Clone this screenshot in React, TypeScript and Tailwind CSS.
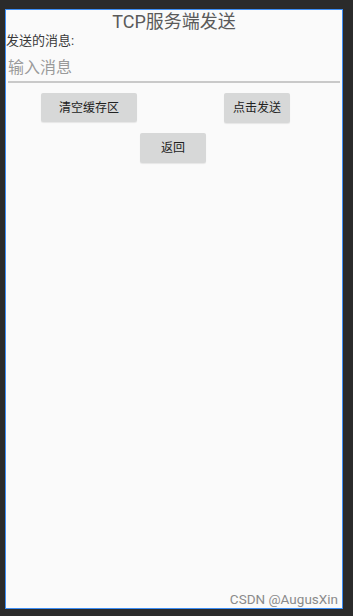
import React from 'react'

const font = { fontFamily: 'Roboto, "Noto Sans CJK SC", sans-serif' }

function Btn({ label, className }: { label: string; className: string }) {
  return (
    <button
      className={`flex items-center justify-center rounded-[2px] bg-[#d7d8d8] text-[12px] text-[#222] shadow-[0_1px_1px_rgba(0,0,0,0.08)] ${className}`}
    >
      {label}
    </button>
  )
}

export default function App() {
  return (
    <div className="relative h-[616px] w-[353px] bg-[#2b2b2b] pl-[5px] pt-[9px]" style={font}>
      <div className="flex h-[600px] w-[338px] flex-col border border-[#3d8ef5] bg-[#fafafa]">
        <h1 className="h-[23px] text-center text-[18px] leading-[23px] text-[#5a5a5a]">TCP服务端发送</h1>
        <p className="h-[15px] text-[13px] leading-[15px] text-[#3a3a3a]">发送的消息:</p>
        <div className="mx-[2px] mt-[8px] border-b-2 border-[#c9c9c9] pb-[1px]">
          <input
            placeholder="输入消息"
            className="h-[22px] w-full bg-transparent pl-0 text-[16px] leading-[22px] text-[#333] outline-none placeholder:text-[#9a9a9a]"
          />
        </div>
        <div className="mt-[10px] flex">
          <Btn label="清空缓存区" className="ml-[35px] h-[29px] w-[96px]" />
          <Btn label="点击发送" className="ml-[87px] h-[30px] w-[66px]" />
        </div>
        <div className="mt-[10px] flex">
          <Btn label="返回" className="ml-[134px] h-[30px] w-[66px]" />
        </div>
      </div>
      <span className="absolute bottom-[9px] right-[15px] text-[13.5px] leading-[15px] text-[#8a8a8a]">CSDN @AugusXin</span>
    </div>
  )
}
